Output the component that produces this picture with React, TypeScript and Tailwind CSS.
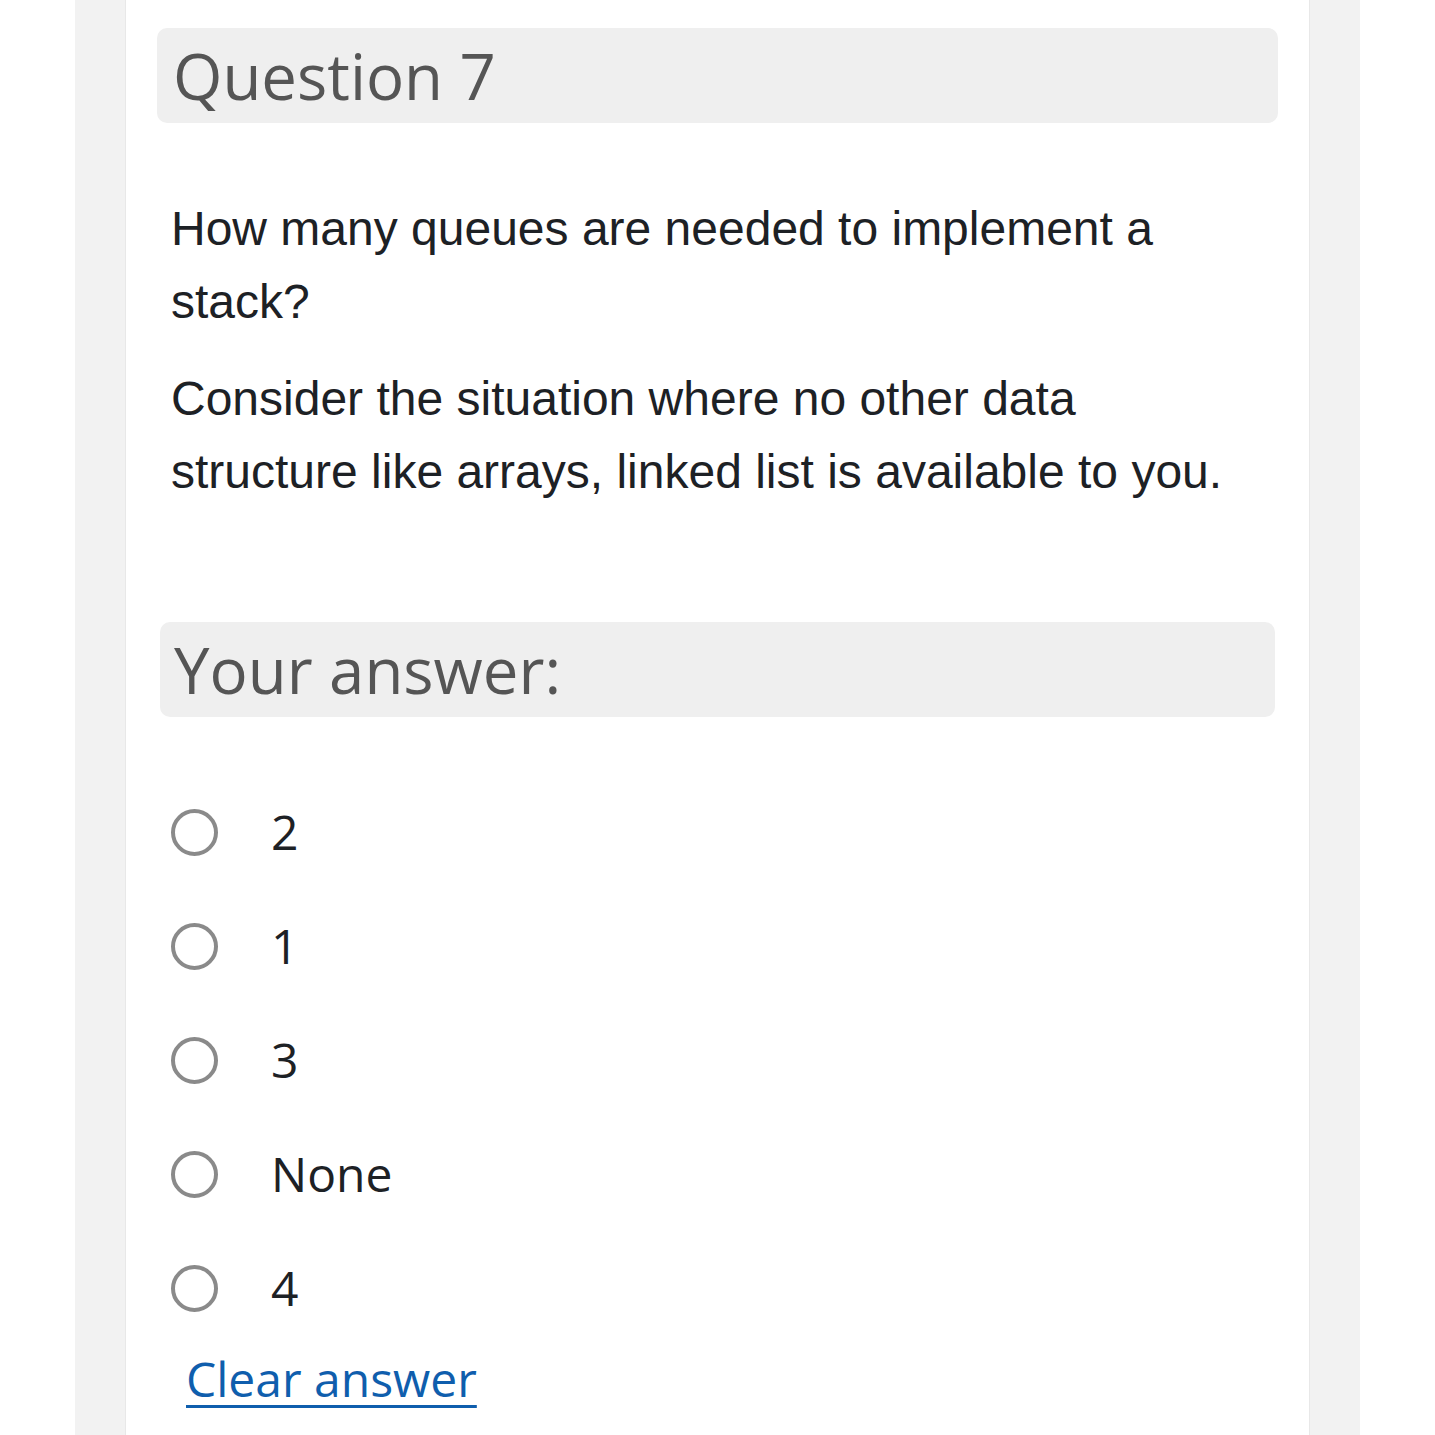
const options = ["2", "1", "3", "None", "4"];

function Radio() {
  return (
    <span className="block h-[47px] w-[47px] shrink-0 rounded-full border-[4px] border-[#8a8a8a] bg-white" />
  );
}

export default function App() {
  return (
    <div className="min-h-[1435px] bg-white">
      <div className="mx-[75px] min-h-[1435px] w-[1285px] bg-[#f2f2f2] px-[50px]">
        <div className="min-h-[1435px] border-x border-[#e8e8e8] bg-white pl-[31px] pr-[31px] pt-[28px]">
          <div className="flex h-[95px] items-center rounded-[10px] bg-[#efefef] px-[16px] font-['Open_Sans',sans-serif] text-[63.5px] text-[#555555]">
            Question 7
          </div>

          <div className="mt-[69px] w-[1090px] pl-[14px] font-['Liberation_Sans',Arial,sans-serif] text-[48px] leading-[73px] text-[#1d2125]">
            <p>How many queues are needed to implement a stack?</p>
            <p className="mt-[24px]">
              Consider the situation where no other data structure like arrays, linked list is available to you.
            </p>
          </div>

          <div className="mx-[3px] mt-[114px] flex h-[95px] items-center rounded-[10px] bg-[#efefef] px-[14px] font-['Open_Sans',sans-serif] text-[63.5px] text-[#555555]">
            Your answer:
          </div>

          <div className="mt-[58px] pl-[14px] font-['Open_Sans',sans-serif] text-[48px] text-[#1d2125]">
            {options.map((o) => (
              <div key={o} className="flex h-[114px] items-center gap-[53px]">
                <Radio />
                <span>{o}</span>
              </div>
            ))}
          </div>

          <div className="mt-[4px] pl-[29px]">
            <a className="font-['Open_Sans',sans-serif] text-[48px] leading-[60px] text-[#0f5ead] underline decoration-[3px] underline-offset-[8px]">
              Clear answer
            </a>
          </div>
        </div>
      </div>
    </div>
  );
}
